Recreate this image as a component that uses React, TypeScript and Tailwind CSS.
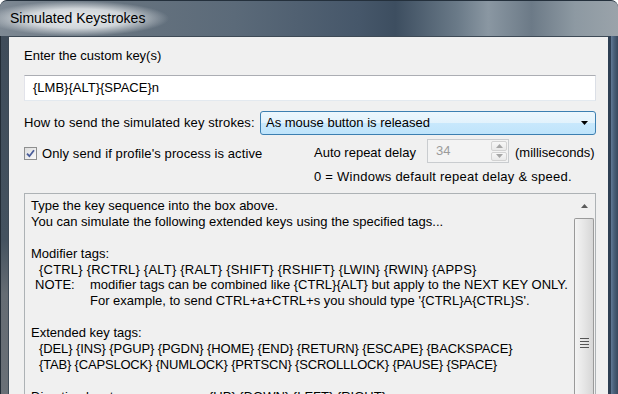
const ui = "font-['Liberation_Sans','Segoe_UI',Arial,sans-serif]"

function Caret({ up, color = '#000' }: { up?: boolean; color?: string }) {
  return (
    <svg width="7" height="4" viewBox="0 0 7 4" className="block">
      <path d={up ? 'M0 4 L3.5 0 L7 4 Z' : 'M0 0 L7 0 L3.5 4 Z'} fill={color} />
    </svg>
  )
}

function Spinner() {
  return (
    <div className="flex h-[24px] w-[82px] items-stretch border border-[#c9cccf] bg-[#f3f3f3]">
      <div className="flex flex-1 items-center pl-[8px] text-[#9b9b9b]">34</div>
      <div className="flex w-[17px] flex-col gap-px py-px pr-px">
        <div className="flex flex-1 items-center justify-center rounded-[2px] border border-[#d2d2d2] bg-[linear-gradient(#f7f7f7,#e9e9e9)]">
          <Caret up color="#a6a6a6" />
        </div>
        <div className="flex flex-1 items-center justify-center rounded-[2px] border border-[#d2d2d2] bg-[linear-gradient(#f7f7f7,#e9e9e9)]">
          <Caret color="#a6a6a6" />
        </div>
      </div>
    </div>
  )
}

function HelpText() {
  const line = 'h-[15.9px] leading-[15.9px] whitespace-nowrap'
  return (
    <div className="pl-[6px] pt-[4px]">
      <div className={line}>Type the key sequence into the box above.</div>
      <div className={line}>You can simulate the following extended keys using the specified tags...</div>
      <div className={line}></div>
      <div className={line}>Modifier tags:</div>
      <div className={`${line} pl-[8px] tracking-[0.2px]`}>{'{CTRL} {RCTRL} {ALT} {RALT} {SHIFT} {RSHIFT} {LWIN} {RWIN} {APPS}'}</div>
      <div className={`${line} flex pl-[4px]`}>
        <span className="w-[55px]">NOTE:</span>
        <span>{'modifier tags can be combined like {CTRL}{ALT} but apply to the NEXT KEY ONLY.'}</span>
      </div>
      <div className={`${line} pl-[59px]`}>{"For example, to send CTRL+a+CTRL+s you should type '{CTRL}A{CTRL}S'."}</div>
      <div className={line}></div>
      <div className={line}>Extended key tags:</div>
      <div className={`${line} pl-[8px] tracking-[-0.1px]`}>{'{DEL} {INS} {PGUP} {PGDN} {HOME} {END} {RETURN} {ESCAPE} {BACKSPACE}'}</div>
      <div className={`${line} pl-[8px] tracking-[-0.18px]`}>{'{TAB} {CAPSLOCK} {NUMLOCK} {PRTSCN} {SCROLLLOCK} {PAUSE} {SPACE}'}</div>
      <div className={line}></div>
      <div className={`${line} flex`}>
        <span className="w-[178px]">Direction key tags:</span>
        <span>{'{UP} {DOWN} {LEFT} {RIGHT}'}</span>
      </div>
    </div>
  )
}

export default function App() {
  return (
    <div className={`${ui} flex h-[394px] w-[618px] flex-col overflow-hidden rounded-t-[7px] border-t border-[#24303c] bg-[#4b5b6b] text-[13px] text-black`}>
      {/* title bar */}
      <div className="flex h-[35px] items-center bg-[linear-gradient(90deg,#7d8893_0%,#66737f_20%,#5b6a79_38%,#46576a_58%,#3d4e60_64%,#6a7a88_74%,#8a97a2_79%,#6c7a87_86%,#8d99a2_93%,#9aa3aa_100%)]">
        <span className="ml-[-14px] bg-[radial-gradient(ellipse_closest-side,rgba(236,239,241,0.95)_0%,rgba(226,230,233,0.85)_55%,rgba(200,208,214,0)_100%)] px-[24px] py-[9px] text-[14px] leading-[17px] text-black">
          Simulated Keystrokes
        </span>
      </div>

      <div className="flex flex-1">
        {/* left frame */}
        <div className="w-[8px] bg-[linear-gradient(180deg,#3f4c5a_0%,#44525f_55%,#656c73_70%,#6a7077_100%)] shadow-[inset_1px_0_0_#222c36]" />

        {/* client area */}
        <div className="flex flex-1 flex-col border-l border-t border-[#3e4a56] bg-[#f0f0f0] pl-[15px] pr-[12px]">
          <div className="mt-[11px] h-[16px] leading-[16px]">Enter the custom key(s)</div>

          <div className="mt-[11px] flex h-[26px] items-center border border-[#abadb3] border-b-[#e3e9ef] border-l-[#e2e3ea] border-r-[#dbdfe6] bg-white pl-[8px]">
            {'{LMB}{ALT}{SPACE}n'}
          </div>

          <div className="mt-[10px] flex h-[24px] items-center">
            <span className="w-[236px] whitespace-nowrap tracking-[0.12px]">How to send the simulated key strokes:</span>
            <div className="flex h-[24px] flex-1 items-center justify-between rounded-[3px] border border-[#3c7fb1] bg-[linear-gradient(180deg,#ecf7fd_0%,#e2f2fc_50%,#c8e8fc_51%,#bfe4fb_100%)] pl-[5px] pr-[7px]">
              <span>As mouse button is released</span>
              <Caret />
            </div>
          </div>

          <div className="mt-[4px] flex">
            <div className="flex w-[290px] items-start pt-[8px]">
              <div className="flex h-[13px] w-[13px] items-center justify-center border border-[#8e8f8f] bg-[linear-gradient(135deg,#dcdcdc,#fbfbfb)]">
                <svg width="9" height="9" viewBox="0 0 9 9">
                  <path d="M1 4.6 L3.4 7.2 L8 1.2" fill="none" stroke="#4a5d9a" strokeWidth="1.8" />
                </svg>
              </div>
              <span className="ml-[5px] whitespace-nowrap leading-[14px] tracking-[0.1px]">Only send if profile's process is active</span>
            </div>
            <div className="flex flex-col">
              <div className="flex h-[24px] items-center">
                <span className="w-[113px] pt-[3px]">Auto repeat delay</span>
                <Spinner />
                <span className="ml-[6px] pt-[3px]">(milliseconds)</span>
              </div>
              <div className="mt-[6px] h-[16px] leading-[16px] whitespace-nowrap tracking-[0.25px]">0 = Windows default repeat delay &amp; speed.</div>
            </div>
          </div>

          {/* help box */}
          <div className="mt-[8px] flex flex-1 border border-b-0 border-[#adb2b5] bg-[#f0f0f0]">
            <div className="flex-1 overflow-hidden">
              <HelpText />
            </div>
            <div className="flex w-[21px] flex-col pr-[1px]">
              <div className="flex h-[24px] items-center justify-center">
                <Caret up color="#5b5b5b" />
              </div>
              <div className="flex flex-1 items-start justify-center rounded-t-[2px] border border-b-0 border-[#9a9a9a] bg-[linear-gradient(90deg,#f4f4f4,#e3e3e3_60%,#d6d6d6)] pt-[119px]">
                <div className="flex flex-col gap-[2px]">
                  <div className="h-px w-[9px] bg-[#555]" />
                  <div className="h-px w-[9px] bg-[#555]" />
                  <div className="h-px w-[9px] bg-[#555]" />
                  <div className="h-px w-[9px] bg-[#555]" />
                </div>
              </div>
            </div>
          </div>
        </div>

        {/* right frame */}
        <div className="w-[10px] bg-[linear-gradient(90deg,#2d3e52_0%,#2d3e52_25%,#5d7591_35%,#4a6079_60%,#37495e_100%)]" />
      </div>
    </div>
  )
}
